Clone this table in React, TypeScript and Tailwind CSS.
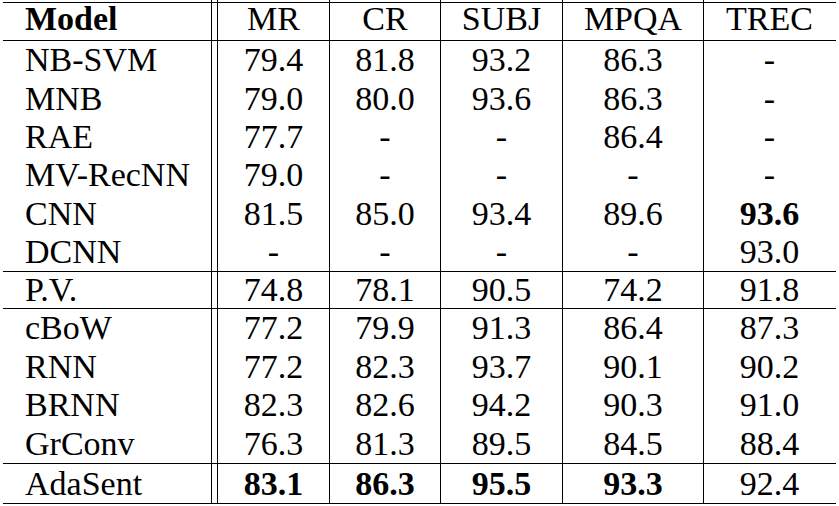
import React from "react";

type Cell = { v: string; b?: boolean };
type Row = { name: string; bold?: boolean; cells: Cell[]; h: string };

const c = (v: string, b?: boolean): Cell => ({ v, b });

const group1: Row[] = [
  { name: "NB-SVM", h: "h-[38px]", cells: [c("79.4"), c("81.8"), c("93.2"), c("86.3"), c("-")] },
  { name: "MNB", h: "h-[39px]", cells: [c("79.0"), c("80.0"), c("93.6"), c("86.3"), c("-")] },
  { name: "RAE", h: "h-[38px]", cells: [c("77.7"), c("-"), c("-"), c("86.4"), c("-")] },
  { name: "MV-RecNN", h: "h-[38px]", cells: [c("79.0"), c("-"), c("-"), c("-"), c("-")] },
  { name: "CNN", h: "h-[39px]", cells: [c("81.5"), c("85.0"), c("93.4"), c("89.6"), c("93.6", true)] },
  { name: "DCNN", h: "h-[38px]", cells: [c("-"), c("-"), c("-"), c("-"), c("93.0")] },
];
const group2: Row[] = [
  { name: "P.V.", h: "h-[36px]", cells: [c("74.8"), c("78.1"), c("90.5"), c("74.2"), c("91.8")] },
];
const group3: Row[] = [
  { name: "cBoW", h: "h-[38px]", cells: [c("77.2"), c("79.9"), c("91.3"), c("86.4"), c("87.3")] },
  { name: "RNN", h: "h-[39px]", cells: [c("77.2"), c("82.3"), c("93.7"), c("90.1"), c("90.2")] },
  { name: "BRNN", h: "h-[38px]", cells: [c("82.3"), c("82.6"), c("94.2"), c("90.3"), c("91.0")] },
  { name: "GrConv", h: "h-[39px]", cells: [c("76.3"), c("81.3"), c("89.5"), c("84.5"), c("88.4")] },
];
const group4: Row[] = [
  { name: "AdaSent", h: "h-[39px]", cells: [c("83.1", true), c("86.3", true), c("95.5", true), c("93.3", true), c("92.4")] },
];

const widths = ["w-[112px]", "w-[111px]", "w-[122px]", "w-[141px]", "w-[132px]"];

function TableRow({ row, header }: { row: Row; header?: boolean }) {
  return (
    <div className={`flex ${row.h}`}>
      <div
        className={`w-[209px] border-r border-black flex items-center pl-[22px] ${
          header || row.bold ? "font-bold" : ""
        } ${header ? "pb-[5px]" : ""}`}
      >
        {row.name}
      </div>
      <div className="w-[5px]" />
      {row.cells.map((cell, i) => (
        <div
          key={i}
          className={`${widths[i]} border-l border-black flex items-center justify-center ${
            cell.b ? "font-bold" : ""
          } ${header ? "pb-[5px]" : ""}`}
        >
          {cell.v}
        </div>
      ))}
    </div>
  );
}

function HLine() {
  return <div className="h-px w-[833px] bg-black" />;
}

function Group({ rows }: { rows: Row[] }) {
  return (
    <>
      {rows.map((r) => (
        <TableRow key={r.name} row={r} />
      ))}
    </>
  );
}

export default function App() {
  const header: Row = {
    name: "Model",
    h: "h-[37px]",
    cells: [c("MR"), c("CR"), c("SUBJ"), c("MPQA"), c("TREC")],
  };
  const spacer: Row = { name: "", h: "h-[2px]", cells: [c(""), c(""), c(""), c(""), c("")] };
  return (
    <div className="w-[839px] h-[506px] bg-white text-black overflow-hidden">
      <div className="ml-[3px] text-[34px] leading-none font-['Liberation_Serif','Times_New_Roman',serif]">
        <TableRow row={spacer} />
        <HLine />
        <TableRow row={header} header />
        <HLine />
        <Group rows={group1} />
        <HLine />
        <Group rows={group2} />
        <HLine />
        <Group rows={group3} />
        <HLine />
        <Group rows={group4} />
        <HLine />
      </div>
    </div>
  );
}
